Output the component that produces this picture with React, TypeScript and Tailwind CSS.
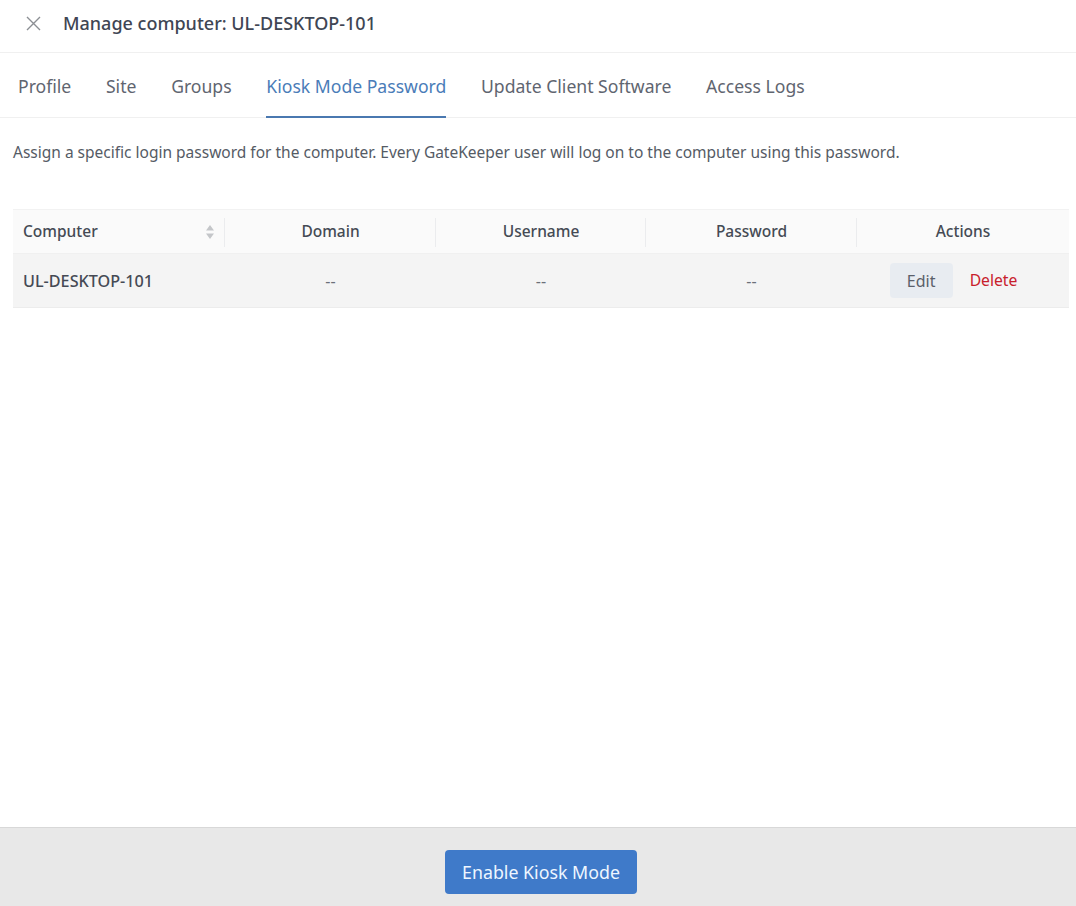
import React from "react";

const tabs = ["Profile", "Site", "Groups", "Kiosk Mode Password", "Update Client Software", "Access Logs"];
const font = "font-['Noto_Sans','Open_Sans',sans-serif]";

function Th({ children, last }: { children: React.ReactNode; last?: boolean }) {
  return (
    <div className="relative flex items-center justify-center text-[15.5px] font-medium text-[#454a54]">
      {children}
      {!last && <span className="absolute right-0 top-[8px] h-[29px] w-px bg-[#ebecee]" />}
    </div>
  );
}

function Td({ children }: { children: React.ReactNode }) {
  return <div className="flex items-center justify-center text-[16px] text-[#6b7079]">{children}</div>;
}

const cols = "grid grid-cols-[212px_211px_210px_211px_1fr]";

export default function App() {
  return (
    <div className={`flex h-[906px] w-[1076px] flex-col overflow-hidden bg-white ${font}`}>
      <header className="flex h-[53px] shrink-0 items-center border-b border-[#f0f0f0] pb-[6px] pl-[26px]">
        <svg width="15" height="15" viewBox="0 0 15 15" fill="none" stroke="#8c8f94" strokeWidth="1.4">
          <path d="M1 1l13 13M14 1L1 14" />
        </svg>
        <h1 className="ml-[22px] text-[18px] font-medium leading-none text-[#3f4654]">Manage computer: UL-DESKTOP-101</h1>
      </header>

      <nav className="flex h-[65px] shrink-0 gap-[34.7px] border-b border-[#f0f0f0] pl-[18px]">
        {tabs.map((t, i) => (
          <div
            key={t}
            className={`flex h-[65px] items-center border-b-2 pt-[3px] text-[17.6px] ${
              i === 3 ? "border-[#4a78b0] text-[#4a7cb8]" : "border-transparent text-[#5f6570]"
            }`}
          >
            {t}
          </div>
        ))}
      </nav>

      <main className="flex-1 px-[13px]">
        <p className="mt-[22px] text-[15.5px] leading-[24px] text-[#555b65]">
          Assign a specific login password for the computer. Every GateKeeper user will log on to the computer using this password.
        </p>

        <div className="mt-[45px] w-[1056px] border-t border-[#f2f2f2]">
          <div className={`${cols} h-[44px] border-b border-[#f0f0f0] bg-[#fafafa]`}>
            <div className="relative flex items-center justify-between pl-[10px] pr-[10px] text-[15.5px] font-medium text-[#454a54]">
              Computer
              <svg width="10" height="16" viewBox="0 0 10 16" fill="#c4c6c9">
                <path d="M5 1l4 5.5H1zM5 15l4-5.5H1z" />
              </svg>
              <span className="absolute right-0 top-[8px] h-[29px] w-px bg-[#ebecee]" />
            </div>
            <Th>Domain</Th>
            <Th>Username</Th>
            <Th>Password</Th>
            <Th last>Actions</Th>
          </div>
          <div className={`${cols} h-[54px] border-b border-[#ececec] bg-[#f4f4f4]`}>
            <div className="flex items-center pl-[10px] pt-[1px] text-[16.2px] font-medium text-[#454a54]">UL-DESKTOP-101</div>
            <Td>--</Td>
            <Td>--</Td>
            <Td>--</Td>
            <div className="flex items-center justify-center gap-[17px] pr-[19px]">
              <button className="flex h-[35px] w-[63px] items-center justify-center rounded-[4px] bg-[#e8ecf1] text-[16px] text-[#5a606a]">
                Edit
              </button>
              <span className="pt-[1px] text-[15.7px] text-[#c8202c]">Delete</span>
            </div>
          </div>
        </div>
      </main>

      <footer className="flex h-[79px] shrink-0 items-start justify-center border-t border-[#d8d8d8] bg-[#e8e8e8] pl-[6px] pt-[22px]">
        <button className="flex h-[44px] w-[192px] items-center justify-center rounded-[4px] bg-[#3f7ac9] text-[17.8px] text-[#eef6ff]">
          Enable Kiosk Mode
        </button>
      </footer>
    </div>
  );
}
